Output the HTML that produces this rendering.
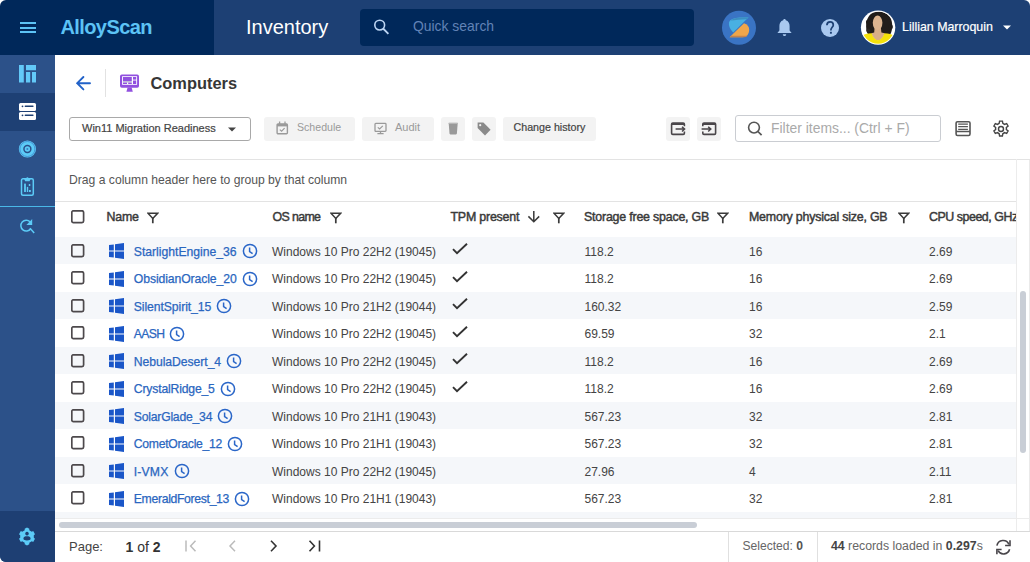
<!DOCTYPE html>
<html><head><meta charset="utf-8">
<style>
*{box-sizing:border-box;margin:0;padding:0}
html,body{width:1030px;height:562px;overflow:hidden;background:#fff;font-family:"Liberation Sans",sans-serif;}
.abs{position:absolute}
#app{position:absolute;left:0;top:0;width:1030px;height:562px;overflow:hidden;border-radius:6px;background:#fff}
#hdrL{position:absolute;left:0;top:0;width:214px;height:55px;background:#00285a}
#hdrR{position:absolute;left:214px;top:0;width:816px;height:55px;background:#1d4074}
#side{position:absolute;left:0;top:55px;width:55px;height:507px;background:#2c5189}
.t{position:absolute;white-space:nowrap;line-height:1}
.row{position:absolute;left:55px;width:961px;height:27.5px}
.cb{position:absolute;width:14px;height:14px}
.nm{position:absolute;left:52.7px;top:5.2px;height:17px;display:flex;align-items:center;white-space:nowrap}
.win{position:absolute;left:53.2px;top:5.8px}
.nmt{position:absolute;left:78.8px;top:9.4px;white-space:nowrap;font-size:12.2px;color:#2a66c0;line-height:1;-webkit-text-stroke:0.25px #2a66c0}
.clk{position:absolute;top:6.5px;width:16px;height:16px} .clk svg{display:block}
.c{position:absolute;top:9px;font-size:12px;color:#444;line-height:1;white-space:nowrap}
.os{left:217px}
.st{left:529.5px}
.me{left:694px}
.cp{left:874px}
.chk{position:absolute;left:397.3px;top:4.7px}
.hd{position:absolute;top:211px;font-size:12.4px;font-weight:normal;color:#3a3a3a;line-height:1;white-space:nowrap;letter-spacing:-0.2px;-webkit-text-stroke:0.45px #3a3a3a}
.btn{position:absolute;top:117px;height:24px;background:#f3f3f3;border-radius:3px}
</style></head><body>
<div id="app">
<div id="hdrL"></div>
<div id="hdrR"></div>
<!-- hamburger -->
<div class="abs" style="left:20px;top:22px;width:16px;height:2px;background:#5cc3f5"></div>
<div class="abs" style="left:20px;top:26.5px;width:16px;height:2px;background:#5cc3f5"></div>
<div class="abs" style="left:20px;top:31px;width:16px;height:2px;background:#5cc3f5"></div>
<div class="t" style="left:60.5px;top:17px;font-size:20px;font-weight:bold;letter-spacing:-0.6px;color:#5cc3f5">AlloyScan</div>
<div class="t" style="left:246px;top:17px;font-size:20px;color:#fff">Inventory</div>
<div class="abs" style="left:360px;top:9px;width:334.4px;height:37.4px;background:#00285a;border-radius:4px"></div>
<svg class="abs" style="left:372px;top:18px" width="20" height="20" viewBox="0 0 20 20"><circle cx="7.7" cy="7.1" r="4.9" fill="none" stroke="#bcd5f3" stroke-width="1.6"/><path d="M11.1 10.5L16.4 15.8" stroke="#bcd5f3" stroke-width="1.8"/></svg>
<div class="t" style="left:413px;top:20.4px;font-size:13.9px;color:#6283b6">Quick search</div>
<!-- logo -->
<svg class="abs" style="left:721px;top:10px" width="36" height="36" viewBox="0 0 36 36"><circle cx="18" cy="17.7" r="17" fill="#3a74c4"/><path d="M8 12.5 C8.6 9.6 13 8.2 19 7.6 L27.6 7.2 L12.2 22.4 C9 19.5 7.4 15.5 8 12.5Z" fill="#48b0e2"/><path d="M9.5 10.5 C12 8.6 16 7.8 20 7.6 L27.6 7.2 L25.6 9.2 C20 9.4 14 10 9.5 10.5Z" fill="#3d8fc0"/><path d="M8.6 27.3 L23 13.2 C26.2 14 28.2 16.6 28.2 19.8 C28.2 24.2 25.4 27.3 21.6 27.3Z" fill="#f0a64a"/><path d="M10.2 25.8 H26.6 C25.6 26.8 23.8 27.3 21.6 27.3 H8.6Z" fill="#c4844e"/></svg>
<!-- bell -->
<svg class="abs" style="left:776px;top:18px" width="17" height="19" viewBox="0 0 17 19"><path d="M8.5 1C9.3 1 9.8 1.6 9.8 2.3 C12.4 3 13.6 5.4 13.6 8 V12.5 L15.6 15 H1.4 L3.4 12.5 V8 C3.4 5.4 4.6 3 7.2 2.3 C7.2 1.6 7.7 1 8.5 1Z" fill="#a9c8ef"/><path d="M6.8 16.2H10.2C10.2 17.2 9.5 18 8.5 18S6.8 17.2 6.8 16.2Z" fill="#a9c8ef"/></svg>
<!-- help -->
<svg class="abs" style="left:820px;top:17.6px" width="20" height="20" viewBox="0 0 20 20"><circle cx="10" cy="10" r="9" fill="#a9c8ef"/><path d="M6.9 7.3C6.9 5.2 8.3 3.9 10.1 3.9C11.9 3.9 13.3 5.1 13.3 6.9C13.3 9 10.9 9.5 10.9 11.9V12.5" fill="none" stroke="#1d4074" stroke-width="1.7"/><rect x="9.95" y="13.8" width="1.9" height="1.9" fill="#1d4074"/></svg>
<!-- avatar -->
<svg class="abs" style="left:860px;top:10px" width="36" height="36" viewBox="0 0 36 36">
<defs><clipPath id="av"><circle cx="18.1" cy="17.6" r="16.2"/></clipPath></defs>
<circle cx="18.1" cy="17.6" r="17.2" fill="#fff"/>
<g clip-path="url(#av)">
<path d="M6.8 22 C5.2 16 6 6 13 2.8 C19 0.6 27 2 30.5 8 C33 13 32.8 20 30.2 24.6 C28 26 25 25.5 23 24 L13 24 C10 25.6 8 25 6.8 22Z" fill="#211d1a"/>
<circle cx="8.6" cy="12" r="2.6" fill="#211d1a"/><circle cx="30.5" cy="17" r="2.4" fill="#211d1a"/><circle cx="8.4" cy="20.5" r="2" fill="#2b2622"/>
<path d="M14.6 17 H20.8 L21.4 22.4 L24.8 23.2 C23 28 20.5 30.6 18 30.6 C15.5 30.6 13 28 11.2 23.2 L14.2 22.4Z" fill="#d8ae88"/>
<ellipse cx="17.6" cy="12.8" rx="4.8" ry="7.3" fill="#ddb590"/>
<path d="M0 36 V27 C3 24.5 7 23.3 11.6 23.3 C13 27.6 15.5 30.2 18 30.2 C20.5 30.2 23 27.6 24.4 23.3 C29 23.3 33 24.5 36 27 V36Z" fill="#f4e10b"/>
</g></svg>
<div class="t" style="left:902px;top:21px;font-size:12.4px;color:#fff;-webkit-text-stroke:0.2px #fff">Lillian Marroquin</div>
<svg class="abs" style="left:1002px;top:25px" width="10" height="6" viewBox="0 0 10 6"><path d="M1 0.5H9L5 4.5Z" fill="#fff"/></svg>

<div id="side"></div>
<!-- active item -->
<div class="abs" style="left:0;top:92.5px;width:55px;height:38px;background:#1e4074"></div>
<div class="abs" style="left:0;top:510.5px;width:55px;height:52px;background:#1e3f73"></div>
<div class="abs" style="left:0;top:206px;width:55px;height:1.3px;background:#4ab8e8"></div>
<!-- side icons -->
<svg class="abs" style="left:18px;top:64px" width="20" height="20" viewBox="0 0 20 20"><path d="M1 1H5.8V18.4H1Z M8 1H18V6.3H8Z M8 8H12.2V18.4H8Z M14 8H18V18.4H14Z" fill="#63c9f8"/></svg>
<svg class="abs" style="left:18px;top:102px" width="20" height="20" viewBox="0 0 20 20"><rect x="1" y="1" width="17" height="8" rx="1.5" fill="#fff"/><rect x="1" y="10" width="17" height="8" rx="1.5" fill="#fff"/><circle cx="4.5" cy="4.3" r="0.9" fill="#1e4074"/><rect x="6.6" y="3.6" width="9" height="1.4" rx="0.7" fill="#1e4074"/><circle cx="4.5" cy="13.3" r="0.9" fill="#1e4074"/><rect x="6.6" y="12.6" width="9" height="1.4" rx="0.7" fill="#1e4074"/></svg>
<svg class="abs" style="left:17px;top:139px" width="20" height="20" viewBox="0 0 20 20"><circle cx="10.4" cy="10" r="8.6" fill="#5ccbf7"/><circle cx="10.4" cy="10" r="7.5" fill="none" stroke="#3f88cf" stroke-width="0.8"/><circle cx="10.4" cy="10" r="4.2" fill="#2a4f8a"/><circle cx="10.4" cy="10" r="2.7" fill="#5ccbf7"/><circle cx="10.4" cy="10" r="1" fill="#3a7cc4"/></svg>
<svg class="abs" style="left:17px;top:176px" width="20" height="22" viewBox="0 0 20 22"><rect x="4.5" y="2.8" width="11.8" height="16.4" rx="1.5" fill="none" stroke="#5ccbf7" stroke-width="1.5"/><path d="M7 2.4H13.8L12.6 5.2H8.2Z" fill="#5ccbf7"/><circle cx="10.4" cy="2.4" r="1.1" fill="#5ccbf7"/><rect x="7.1" y="7.6" width="1.8" height="8.4" fill="#5ccbf7"/><rect x="9.8" y="10.9" width="1.4" height="5.1" fill="#5ccbf7"/><rect x="11.8" y="8" width="1.5" height="2" fill="#5ccbf7"/><rect x="12" y="14" width="1.8" height="2" fill="#5ccbf7"/></svg>
<svg class="abs" style="left:17.4px;top:215.7px" width="20" height="20" viewBox="0 0 20 20"><path d="M13.1 5.9 A5.4 5.4 0 1 0 13.7 12.8" fill="none" stroke="#5ccbf7" stroke-width="1.5"/><path d="M15.2 3V8.9H9.4Z" fill="#5ccbf7"/><path d="M13 12.3L17.2 16.9" stroke="#5ccbf7" stroke-width="1.5"/></svg>
<svg class="abs" style="left:17.4px;top:526px" width="20" height="20" viewBox="0 0 20 20"><path fill="#5ccbf7" fill-rule="evenodd" d="M10 1.5 L12.3 2.8 V4.3 L14.8 5.7 L16.2 5 L18 8.3 L16.8 9.3 V11.7 L18 12.7 L16.2 16 L14.8 15.3 L12.3 16.7 V18.2 L10 19.5 L7.7 18.2 V16.7 L5.2 15.3 L3.8 16 L2 12.7 L3.2 11.7 V9.3 L2 8.3 L3.8 5 L5.2 5.7 L7.7 4.3 V2.8 Z M10 5.8 A1.8 1.8 0 1 0 10.01 5.8 Z M6.4 12.8 C6.4 10.8 8 10.2 10 10.2 C12 10.2 13.6 10.8 13.6 12.8 C13.6 14 12 14.4 10 14.4 C8 14.4 6.4 14 6.4 12.8Z"/></svg>

<!-- title -->
<svg class="abs" style="left:74px;top:74px" width="18" height="18" viewBox="0 0 18 18"><path d="M16 9.2H3.2 M9.4 3L3.2 9.2L9.4 15.4" fill="none" stroke="#2262c8" stroke-width="1.9" stroke-linecap="round"/></svg>
<div class="abs" style="left:105px;top:69px;width:1px;height:28px;background:#e2e2e2"></div>
<svg class="abs" style="left:119px;top:73px" width="22" height="20" viewBox="0 0 22 20"><rect x="1" y="1.6" width="19" height="13.2" rx="1.8" fill="#9150df"/><path d="M8.6 14.5H12.6L13.8 18.8H7.4Z" fill="#9150df"/><rect x="3.1" y="3.2" width="15" height="8.6" fill="#fff"/><rect x="4" y="4" width="8.8" height="4.1" fill="#9150df"/><rect x="4" y="8.3" width="8.8" height="1.1" fill="#a6a6c8"/><rect x="4" y="9.6" width="4" height="1.4" fill="#9150df"/><rect x="9.2" y="9.6" width="3.6" height="1.4" fill="#9150df"/><rect x="14" y="4" width="3.2" height="2.6" fill="#9150df"/><rect x="14" y="7.5" width="3.2" height="3.5" fill="#9150df"/></svg>
<div class="t" style="left:150.5px;top:75.4px;font-size:16.4px;font-weight:bold;color:#363636">Computers</div>

<!-- toolbar -->
<div class="abs" style="left:69px;top:117px;width:182px;height:24px;border:1px solid #a9a9a9;border-radius:3px"></div>
<div class="t" style="left:82px;top:122.8px;font-size:11px;color:#444;-webkit-text-stroke:0.2px #444">Win11 Migration Readiness</div>
<svg class="abs" style="left:227px;top:127px" width="10" height="5" viewBox="0 0 10 5"><path d="M1 0.5H9L5 4.5Z" fill="#444"/></svg>
<div class="btn" style="left:264px;width:91px"></div>
<svg class="abs" style="left:275px;top:121px" width="14" height="15" viewBox="0 0 14 15"><rect x="2.1" y="2.9" width="10.3" height="9.9" rx="1" fill="none" stroke="#9a9a9a" stroke-width="1.4"/><rect x="2.1" y="2.9" width="10.3" height="2.5" fill="#9a9a9a"/><path d="M4.6 0.4V3 M10 0.4V3" stroke="#9a9a9a" stroke-width="1.3"/><path d="M4.8 8.6L6.6 10.2L9.6 7.2" fill="none" stroke="#9a9a9a" stroke-width="1.2"/></svg>
<div class="t" style="left:297px;top:122.3px;font-size:10.6px;color:#9a9a9a">Schedule</div>
<div class="btn" style="left:362px;width:72px"></div>
<svg class="abs" style="left:373px;top:121px" width="15" height="15" viewBox="0 0 15 15"><rect x="2" y="2.4" width="11" height="8" rx="0.8" fill="none" stroke="#9a9a9a" stroke-width="1.3"/><path d="M4.8 6.4L6.6 8L9.8 4.8" fill="none" stroke="#9a9a9a" stroke-width="1.2"/><path d="M7.5 10.6V12.4 M4.4 12.6H10.6" stroke="#9a9a9a" stroke-width="1.3"/></svg>
<div class="t" style="left:395px;top:122.3px;font-size:11px;color:#9a9a9a">Audit</div>
<div class="btn" style="left:441px;width:24px"></div>
<svg class="abs" style="left:447px;top:121px" width="12" height="15" viewBox="0 0 12 15"><path d="M1.8 1.8H10.6V3.6L9.9 12.6Q9.8 13.4 9 13.4H3.4Q2.6 13.4 2.5 12.6L1.8 3.6Z" fill="#9a9a9a"/><rect x="1.6" y="2" width="9.2" height="1" fill="#b8b8b8"/></svg>
<div class="btn" style="left:472px;width:24px"></div>
<svg class="abs" style="left:476px;top:121px" width="16" height="15" viewBox="0 0 16 15"><path d="M1.6 1.6H7.4L14.6 8.8L9 14.4L1.6 7Z" fill="#8a8a8a"/><circle cx="4.2" cy="4.2" r="1.1" fill="#f3f3f3"/></svg>
<div class="btn" style="left:503px;width:93px"></div>
<div class="t" style="left:513.5px;top:122.4px;font-size:10.7px;color:#444;-webkit-text-stroke:0.2px #444">Change history</div>
<div class="btn" style="left:666px;width:24px"></div>
<svg class="abs" style="left:670px;top:121px" width="17" height="15" viewBox="0 0 17 15"><path d="M14.4 5.2V3.2Q14.4 2 13.2 2H2.8Q1.6 2 1.6 3.2V12.2Q1.6 13.4 2.8 13.4H13.2Q14.4 13.4 14.4 12.2V10.4" fill="none" stroke="#4a464a" stroke-width="1.6"/><rect x="1.6" y="2" width="12.8" height="2" fill="#4a464a"/><path d="M5.6 8.1H14.4 M12 5.7L14.6 8.1L12 10.5" fill="none" stroke="#4a464a" stroke-width="1.5"/></svg>
<div class="btn" style="left:697px;width:24px"></div>
<svg class="abs" style="left:701px;top:121px" width="17" height="15" viewBox="0 0 17 15"><path d="M1.8 5.2V3.2Q1.8 2 3 2H13.4Q14.6 2 14.6 3.2V12.2Q14.6 13.4 13.4 13.4H3Q1.8 13.4 1.8 12.2V10.4" fill="none" stroke="#4a464a" stroke-width="1.6"/><rect x="1.8" y="2" width="12.8" height="2" fill="#4a464a"/><path d="M0.6 8.1H9.6 M7.2 5.7L9.8 8.1L7.2 10.5" fill="none" stroke="#4a464a" stroke-width="1.5"/></svg>
<div class="abs" style="left:735px;top:115px;width:206px;height:27px;border:1px solid #cacdd2;border-radius:3px"></div>
<svg class="abs" style="left:746.4px;top:120.3px" width="18" height="17" viewBox="0 0 18 17"><circle cx="8" cy="7.6" r="5.4" fill="none" stroke="#555" stroke-width="1.6"/><path d="M11.9 11.5L15.6 15.2" stroke="#555" stroke-width="1.7"/></svg>
<div class="t" style="left:771px;top:122px;font-size:13.9px;color:#aaa">Filter items... (Ctrl + F)</div>
<svg class="abs" style="left:953px;top:120px" width="19" height="18" viewBox="0 0 19 18"><rect x="3.1" y="1.7" width="13.9" height="13.8" rx="1.4" fill="none" stroke="#555" stroke-width="1.6"/><path d="M5.2 4.1H14.9 M5.2 6.7H14.9 M5.2 9.3H14.9" stroke="#555" stroke-width="1.2"/><path d="M3.1 11.5H17" stroke="#555" stroke-width="1.5"/></svg>
<svg class="abs" style="left:991px;top:119px" width="20" height="20" viewBox="0 0 24 24"><path fill="none" stroke="#444" stroke-width="1.7" d="M10.3 2.5h3.4l.5 2.7a7.5 7.5 0 0 1 2 1.2l2.6-.9 1.7 2.9-2.1 1.8a7.5 7.5 0 0 1 0 2.4l2.1 1.8-1.7 2.9-2.6-.9a7.5 7.5 0 0 1-2 1.2l-.5 2.7h-3.4l-.5-2.7a7.5 7.5 0 0 1-2-1.2l-2.6.9-1.7-2.9 2.1-1.8a7.5 7.5 0 0 1 0-2.4L3.5 8.4l1.7-2.9 2.6.9a7.5 7.5 0 0 1 2-1.2z"/><circle cx="12" cy="12" r="3" fill="none" stroke="#444" stroke-width="1.7"/></svg>

<!-- group panel -->
<div class="abs" style="left:55px;top:158.5px;width:975px;height:1px;background:#e3e3e3"></div>
<div class="t" style="left:69px;top:174px;font-size:12.15px;color:#555">Drag a column header here to group by that column</div>
<div class="abs" style="left:55px;top:201px;width:961px;height:1px;background:#e3e3e3"></div>

<!-- header row -->
<div class="cb" style="left:70.6px;top:210.1px"><svg width="14" height="14" viewBox="0 0 14 14"><rect x="0.8" y="0.8" width="11.8" height="11.8" rx="1.6" fill="none" stroke="#4d494c" stroke-width="1.7"/></svg></div>
<div class="hd" style="left:106.5px">Name</div>
<svg class="abs" style="left:147.3px;top:211.5px" width="12" height="12" viewBox="0 0 12 12"><path d="M1 1.3H10.6L5.8 6.4Z" fill="none" stroke="#3a3a3a" stroke-width="1.5" stroke-linejoin="miter"/><path d="M5.8 5.8V11.3" stroke="#3a3a3a" stroke-width="1.7"/></svg>
<div class="hd" style="left:272.5px;letter-spacing:-0.65px">OS name</div>
<svg class="abs" style="left:330.3px;top:211.5px" width="12" height="12" viewBox="0 0 12 12"><path d="M1 1.3H10.6L5.8 6.4Z" fill="none" stroke="#3a3a3a" stroke-width="1.5" stroke-linejoin="miter"/><path d="M5.8 5.8V11.3" stroke="#3a3a3a" stroke-width="1.7"/></svg>
<div class="hd" style="left:450.5px">TPM present</div>
<svg class="abs" style="left:527px;top:210px" width="13" height="14" viewBox="0 0 13 14"><path d="M6.8 1V12 M1.4 6.4L6.8 11.8L12.2 6.4" fill="none" stroke="#3a3a3a" stroke-width="1.5"/></svg>
<svg class="abs" style="left:552.8px;top:211.5px" width="12" height="12" viewBox="0 0 12 12"><path d="M1 1.3H10.6L5.8 6.4Z" fill="none" stroke="#3a3a3a" stroke-width="1.5" stroke-linejoin="miter"/><path d="M5.8 5.8V11.3" stroke="#3a3a3a" stroke-width="1.7"/></svg>
<div class="hd" style="left:584px">Storage free space, GB</div>
<svg class="abs" style="left:717.3px;top:211.5px" width="12" height="12" viewBox="0 0 12 12"><path d="M1 1.3H10.6L5.8 6.4Z" fill="none" stroke="#3a3a3a" stroke-width="1.5" stroke-linejoin="miter"/><path d="M5.8 5.8V11.3" stroke="#3a3a3a" stroke-width="1.7"/></svg>
<div class="hd" style="left:749px">Memory physical size, GB</div>
<svg class="abs" style="left:898.3px;top:211.5px" width="12" height="12" viewBox="0 0 12 12"><path d="M1 1.3H10.6L5.8 6.4Z" fill="none" stroke="#3a3a3a" stroke-width="1.5" stroke-linejoin="miter"/><path d="M5.8 5.8V11.3" stroke="#3a3a3a" stroke-width="1.7"/></svg>
<div class="abs" style="left:929px;top:200px;width:87px;height:30px;overflow:hidden"><div class="hd" style="left:0;top:11px;letter-spacing:-0.45px">CPU speed, GHz</div></div>

<!-- rows -->
<div class="abs" style="left:0;top:0;width:1016px;height:518.5px;overflow:hidden">
<div class="row" style="top:236.60px;background:#f5f7fa">
<div class="cb" style="left:15.9px;top:7.2px"><svg width="14" height="14" viewBox="0 0 14 14"><rect x="0.8" y="0.8" width="11.8" height="11.8" rx="1.6" fill="none" stroke="#4d494c" stroke-width="1.7"/></svg></div>
<svg class="win" width="16" height="17" viewBox="0 0 16 17"><path fill="#1a56c8" d="M1 3.1L5.8 2.4V8.5H1Z M1 9.5H5.8V15.6L1 15Z M7 2.2L16 0.9V8.5H7Z M7 9.5H16V17L7 15.8Z"/></svg><div class="nmt" style="letter-spacing:-0.011px">StarlightEngine_36</div><div class="clk" style="left:186.65px"><svg width="16" height="16" viewBox="0 0 16 16"><circle cx="8" cy="8" r="6.6" fill="none" stroke="#2a66c8" stroke-width="1.5"/><path d="M7.6 4.6V8.6L10.6 10.6" fill="none" stroke="#2a66c8" stroke-width="1.5"/></svg></div>
<div class="c os">Windows 10 Pro 22H2 (19045)</div>
<div class="chk"><svg width="16" height="12" viewBox="0 0 16 12"><path d="M1 6.2L5 10.2L15 0.8" fill="none" stroke="#333" stroke-width="1.9"/></svg></div>
<div class="c st">118.2</div>
<div class="c me">16</div>
<div class="c cp">2.69</div>
</div><div class="row" style="top:264.10px;background:#ffffff">
<div class="cb" style="left:15.9px;top:7.2px"><svg width="14" height="14" viewBox="0 0 14 14"><rect x="0.8" y="0.8" width="11.8" height="11.8" rx="1.6" fill="none" stroke="#4d494c" stroke-width="1.7"/></svg></div>
<svg class="win" width="16" height="17" viewBox="0 0 16 17"><path fill="#1a56c8" d="M1 3.1L5.8 2.4V8.5H1Z M1 9.5H5.8V15.6L1 15Z M7 2.2L16 0.9V8.5H7Z M7 9.5H16V17L7 15.8Z"/></svg><div class="nmt" style="letter-spacing:-0.088px">ObsidianOracle_20</div><div class="clk" style="left:186.65px"><svg width="16" height="16" viewBox="0 0 16 16"><circle cx="8" cy="8" r="6.6" fill="none" stroke="#2a66c8" stroke-width="1.5"/><path d="M7.6 4.6V8.6L10.6 10.6" fill="none" stroke="#2a66c8" stroke-width="1.5"/></svg></div>
<div class="c os">Windows 10 Pro 22H2 (19045)</div>
<div class="chk"><svg width="16" height="12" viewBox="0 0 16 12"><path d="M1 6.2L5 10.2L15 0.8" fill="none" stroke="#333" stroke-width="1.9"/></svg></div>
<div class="c st">118.2</div>
<div class="c me">16</div>
<div class="c cp">2.69</div>
</div><div class="row" style="top:291.60px;background:#f5f7fa">
<div class="cb" style="left:15.9px;top:7.2px"><svg width="14" height="14" viewBox="0 0 14 14"><rect x="0.8" y="0.8" width="11.8" height="11.8" rx="1.6" fill="none" stroke="#4d494c" stroke-width="1.7"/></svg></div>
<svg class="win" width="16" height="17" viewBox="0 0 16 17"><path fill="#1a56c8" d="M1 3.1L5.8 2.4V8.5H1Z M1 9.5H5.8V15.6L1 15Z M7 2.2L16 0.9V8.5H7Z M7 9.5H16V17L7 15.8Z"/></svg><div class="nmt" style="letter-spacing:-0.080px">SilentSpirit_15</div><div class="clk" style="left:161.25px"><svg width="16" height="16" viewBox="0 0 16 16"><circle cx="8" cy="8" r="6.6" fill="none" stroke="#2a66c8" stroke-width="1.5"/><path d="M7.6 4.6V8.6L10.6 10.6" fill="none" stroke="#2a66c8" stroke-width="1.5"/></svg></div>
<div class="c os">Windows 10 Pro 21H2 (19044)</div>
<div class="chk"><svg width="16" height="12" viewBox="0 0 16 12"><path d="M1 6.2L5 10.2L15 0.8" fill="none" stroke="#333" stroke-width="1.9"/></svg></div>
<div class="c st">160.32</div>
<div class="c me">16</div>
<div class="c cp">2.59</div>
</div><div class="row" style="top:319.10px;background:#ffffff">
<div class="cb" style="left:15.9px;top:7.2px"><svg width="14" height="14" viewBox="0 0 14 14"><rect x="0.8" y="0.8" width="11.8" height="11.8" rx="1.6" fill="none" stroke="#4d494c" stroke-width="1.7"/></svg></div>
<svg class="win" width="16" height="17" viewBox="0 0 16 17"><path fill="#1a56c8" d="M1 3.1L5.8 2.4V8.5H1Z M1 9.5H5.8V15.6L1 15Z M7 2.2L16 0.9V8.5H7Z M7 9.5H16V17L7 15.8Z"/></svg><div class="nmt" style="letter-spacing:-0.675px">AASH</div><div class="clk" style="left:114.35px"><svg width="16" height="16" viewBox="0 0 16 16"><circle cx="8" cy="8" r="6.6" fill="none" stroke="#2a66c8" stroke-width="1.5"/><path d="M7.6 4.6V8.6L10.6 10.6" fill="none" stroke="#2a66c8" stroke-width="1.5"/></svg></div>
<div class="c os">Windows 10 Pro 22H2 (19045)</div>
<div class="chk"><svg width="16" height="12" viewBox="0 0 16 12"><path d="M1 6.2L5 10.2L15 0.8" fill="none" stroke="#333" stroke-width="1.9"/></svg></div>
<div class="c st">69.59</div>
<div class="c me">32</div>
<div class="c cp">2.1</div>
</div><div class="row" style="top:346.60px;background:#f5f7fa">
<div class="cb" style="left:15.9px;top:7.2px"><svg width="14" height="14" viewBox="0 0 14 14"><rect x="0.8" y="0.8" width="11.8" height="11.8" rx="1.6" fill="none" stroke="#4d494c" stroke-width="1.7"/></svg></div>
<svg class="win" width="16" height="17" viewBox="0 0 16 17"><path fill="#1a56c8" d="M1 3.1L5.8 2.4V8.5H1Z M1 9.5H5.8V15.6L1 15Z M7 2.2L16 0.9V8.5H7Z M7 9.5H16V17L7 15.8Z"/></svg><div class="nmt" style="letter-spacing:-0.057px">NebulaDesert_4</div><div class="clk" style="left:171.15px"><svg width="16" height="16" viewBox="0 0 16 16"><circle cx="8" cy="8" r="6.6" fill="none" stroke="#2a66c8" stroke-width="1.5"/><path d="M7.6 4.6V8.6L10.6 10.6" fill="none" stroke="#2a66c8" stroke-width="1.5"/></svg></div>
<div class="c os">Windows 10 Pro 22H2 (19045)</div>
<div class="chk"><svg width="16" height="12" viewBox="0 0 16 12"><path d="M1 6.2L5 10.2L15 0.8" fill="none" stroke="#333" stroke-width="1.9"/></svg></div>
<div class="c st">118.2</div>
<div class="c me">16</div>
<div class="c cp">2.69</div>
</div><div class="row" style="top:374.10px;background:#ffffff">
<div class="cb" style="left:15.9px;top:7.2px"><svg width="14" height="14" viewBox="0 0 14 14"><rect x="0.8" y="0.8" width="11.8" height="11.8" rx="1.6" fill="none" stroke="#4d494c" stroke-width="1.7"/></svg></div>
<svg class="win" width="16" height="17" viewBox="0 0 16 17"><path fill="#1a56c8" d="M1 3.1L5.8 2.4V8.5H1Z M1 9.5H5.8V15.6L1 15Z M7 2.2L16 0.9V8.5H7Z M7 9.5H16V17L7 15.8Z"/></svg><div class="nmt" style="letter-spacing:-0.171px">CrystalRidge_5</div><div class="clk" style="left:164.75px"><svg width="16" height="16" viewBox="0 0 16 16"><circle cx="8" cy="8" r="6.6" fill="none" stroke="#2a66c8" stroke-width="1.5"/><path d="M7.6 4.6V8.6L10.6 10.6" fill="none" stroke="#2a66c8" stroke-width="1.5"/></svg></div>
<div class="c os">Windows 10 Pro 22H2 (19045)</div>
<div class="chk"><svg width="16" height="12" viewBox="0 0 16 12"><path d="M1 6.2L5 10.2L15 0.8" fill="none" stroke="#333" stroke-width="1.9"/></svg></div>
<div class="c st">118.2</div>
<div class="c me">16</div>
<div class="c cp">2.69</div>
</div><div class="row" style="top:401.60px;background:#f5f7fa">
<div class="cb" style="left:15.9px;top:7.2px"><svg width="14" height="14" viewBox="0 0 14 14"><rect x="0.8" y="0.8" width="11.8" height="11.8" rx="1.6" fill="none" stroke="#4d494c" stroke-width="1.7"/></svg></div>
<svg class="win" width="16" height="17" viewBox="0 0 16 17"><path fill="#1a56c8" d="M1 3.1L5.8 2.4V8.5H1Z M1 9.5H5.8V15.6L1 15Z M7 2.2L16 0.9V8.5H7Z M7 9.5H16V17L7 15.8Z"/></svg><div class="nmt" style="letter-spacing:-0.223px">SolarGlade_34</div><div class="clk" style="left:162.25px"><svg width="16" height="16" viewBox="0 0 16 16"><circle cx="8" cy="8" r="6.6" fill="none" stroke="#2a66c8" stroke-width="1.5"/><path d="M7.6 4.6V8.6L10.6 10.6" fill="none" stroke="#2a66c8" stroke-width="1.5"/></svg></div>
<div class="c os">Windows 10 Pro 21H1 (19043)</div>

<div class="c st">567.23</div>
<div class="c me">32</div>
<div class="c cp">2.81</div>
</div><div class="row" style="top:429.10px;background:#ffffff">
<div class="cb" style="left:15.9px;top:7.2px"><svg width="14" height="14" viewBox="0 0 14 14"><rect x="0.8" y="0.8" width="11.8" height="11.8" rx="1.6" fill="none" stroke="#4d494c" stroke-width="1.7"/></svg></div>
<svg class="win" width="16" height="17" viewBox="0 0 16 17"><path fill="#1a56c8" d="M1 3.1L5.8 2.4V8.5H1Z M1 9.5H5.8V15.6L1 15Z M7 2.2L16 0.9V8.5H7Z M7 9.5H16V17L7 15.8Z"/></svg><div class="nmt" style="letter-spacing:-0.271px">CometOracle_12</div><div class="clk" style="left:172.15px"><svg width="16" height="16" viewBox="0 0 16 16"><circle cx="8" cy="8" r="6.6" fill="none" stroke="#2a66c8" stroke-width="1.5"/><path d="M7.6 4.6V8.6L10.6 10.6" fill="none" stroke="#2a66c8" stroke-width="1.5"/></svg></div>
<div class="c os">Windows 10 Pro 21H1 (19043)</div>

<div class="c st">567.23</div>
<div class="c me">32</div>
<div class="c cp">2.81</div>
</div><div class="row" style="top:456.60px;background:#f5f7fa">
<div class="cb" style="left:15.9px;top:7.2px"><svg width="14" height="14" viewBox="0 0 14 14"><rect x="0.8" y="0.8" width="11.8" height="11.8" rx="1.6" fill="none" stroke="#4d494c" stroke-width="1.7"/></svg></div>
<svg class="win" width="16" height="17" viewBox="0 0 16 17"><path fill="#1a56c8" d="M1 3.1L5.8 2.4V8.5H1Z M1 9.5H5.8V15.6L1 15Z M7 2.2L16 0.9V8.5H7Z M7 9.5H16V17L7 15.8Z"/></svg><div class="nmt" style="letter-spacing:0.160px">I-VMX</div><div class="clk" style="left:118.55px"><svg width="16" height="16" viewBox="0 0 16 16"><circle cx="8" cy="8" r="6.6" fill="none" stroke="#2a66c8" stroke-width="1.5"/><path d="M7.6 4.6V8.6L10.6 10.6" fill="none" stroke="#2a66c8" stroke-width="1.5"/></svg></div>
<div class="c os">Windows 10 Pro 22H2 (19045)</div>

<div class="c st">27.96</div>
<div class="c me">4</div>
<div class="c cp">2.11</div>
</div><div class="row" style="top:484.10px;background:#ffffff">
<div class="cb" style="left:15.9px;top:7.2px"><svg width="14" height="14" viewBox="0 0 14 14"><rect x="0.8" y="0.8" width="11.8" height="11.8" rx="1.6" fill="none" stroke="#4d494c" stroke-width="1.7"/></svg></div>
<svg class="win" width="16" height="17" viewBox="0 0 16 17"><path fill="#1a56c8" d="M1 3.1L5.8 2.4V8.5H1Z M1 9.5H5.8V15.6L1 15Z M7 2.2L16 0.9V8.5H7Z M7 9.5H16V17L7 15.8Z"/></svg><div class="nmt" style="letter-spacing:-0.313px">EmeraldForest_13</div><div class="clk" style="left:179.15px"><svg width="16" height="16" viewBox="0 0 16 16"><circle cx="8" cy="8" r="6.6" fill="none" stroke="#2a66c8" stroke-width="1.5"/><path d="M7.6 4.6V8.6L10.6 10.6" fill="none" stroke="#2a66c8" stroke-width="1.5"/></svg></div>
<div class="c os">Windows 10 Pro 21H1 (19043)</div>

<div class="c st">567.23</div>
<div class="c me">32</div>
<div class="c cp">2.81</div>
</div><div class="row" style="top:511.60px;height:7px;background:#f5f7fa"></div>
</div>

<!-- vertical scrollbar -->
<div class="abs" style="left:1016px;top:159px;width:1px;height:372px;background:#ececec"></div>
<div class="abs" style="left:1020px;top:291px;width:6px;height:162px;background:#c9ced6;border-radius:3px"></div>
<div class="abs" style="left:1029px;top:160px;width:1px;height:372px;background:#eaeaea"></div>

<!-- horizontal scrollbar -->
<div class="abs" style="left:55px;top:518px;width:975px;height:1px;background:#ececec"></div>
<div class="abs" style="left:59px;top:521.6px;width:638px;height:6px;background:#c9ced6;border-radius:3px"></div>
<div class="abs" style="left:55px;top:531px;width:975px;height:1.2px;background:#d9d9d9"></div>

<!-- footer -->
<div class="t" style="left:69px;top:540px;font-size:13px;color:#444">Page:</div>
<div class="t" style="left:125.5px;top:539.5px;font-size:14px;color:#333"><b>1</b> of <b>2</b></div>
<svg class="abs" style="left:184px;top:539px" width="14" height="14" viewBox="0 0 14 14"><path d="M2 1.5V12.5 M11.5 1.8L6.6 7L11.5 12.2" fill="none" stroke="#bbb" stroke-width="1.5"/></svg>
<svg class="abs" style="left:226px;top:539px" width="12" height="14" viewBox="0 0 12 14"><path d="M9 1.8L4 7L9 12.2" fill="none" stroke="#bbb" stroke-width="1.5"/></svg>
<svg class="abs" style="left:268px;top:539px" width="12" height="14" viewBox="0 0 12 14"><path d="M3 1.8L8 7L3 12.2" fill="none" stroke="#333" stroke-width="1.6"/></svg>
<svg class="abs" style="left:307px;top:539px" width="15" height="14" viewBox="0 0 15 14"><path d="M2.5 1.8L7.4 7L2.5 12.2 M12.5 1.5V12.5" fill="none" stroke="#333" stroke-width="1.6"/></svg>
<div class="abs" style="left:728px;top:532px;width:1px;height:30px;background:#e0e0e0"></div>
<div class="abs" style="left:816.5px;top:532px;width:1px;height:30px;background:#e0e0e0"></div>
<div class="t" style="left:742.5px;top:540px;font-size:12.1px;color:#666">Selected: <b style="color:#555">0</b></div>
<div class="t" style="left:831px;top:540px;font-size:12.3px;color:#666"><b style="color:#444">44</b> records loaded in <b style="color:#444">0.297</b>s</div>
<svg class="abs" style="left:995px;top:539px" width="18" height="17" viewBox="0 0 18 17"><path d="M1.9 6.6A6.3 6.3 0 0 1 13.9 5.4 M14.6 10.3A6.3 6.3 0 0 1 3 11.7" fill="none" stroke="#48454a" stroke-width="1.6"/><path d="M10.1 6.5H15V1.3 M6.6 10.5H1.9V15.2" fill="none" stroke="#48454a" stroke-width="1.6"/></svg>
</div>
</body></html>
